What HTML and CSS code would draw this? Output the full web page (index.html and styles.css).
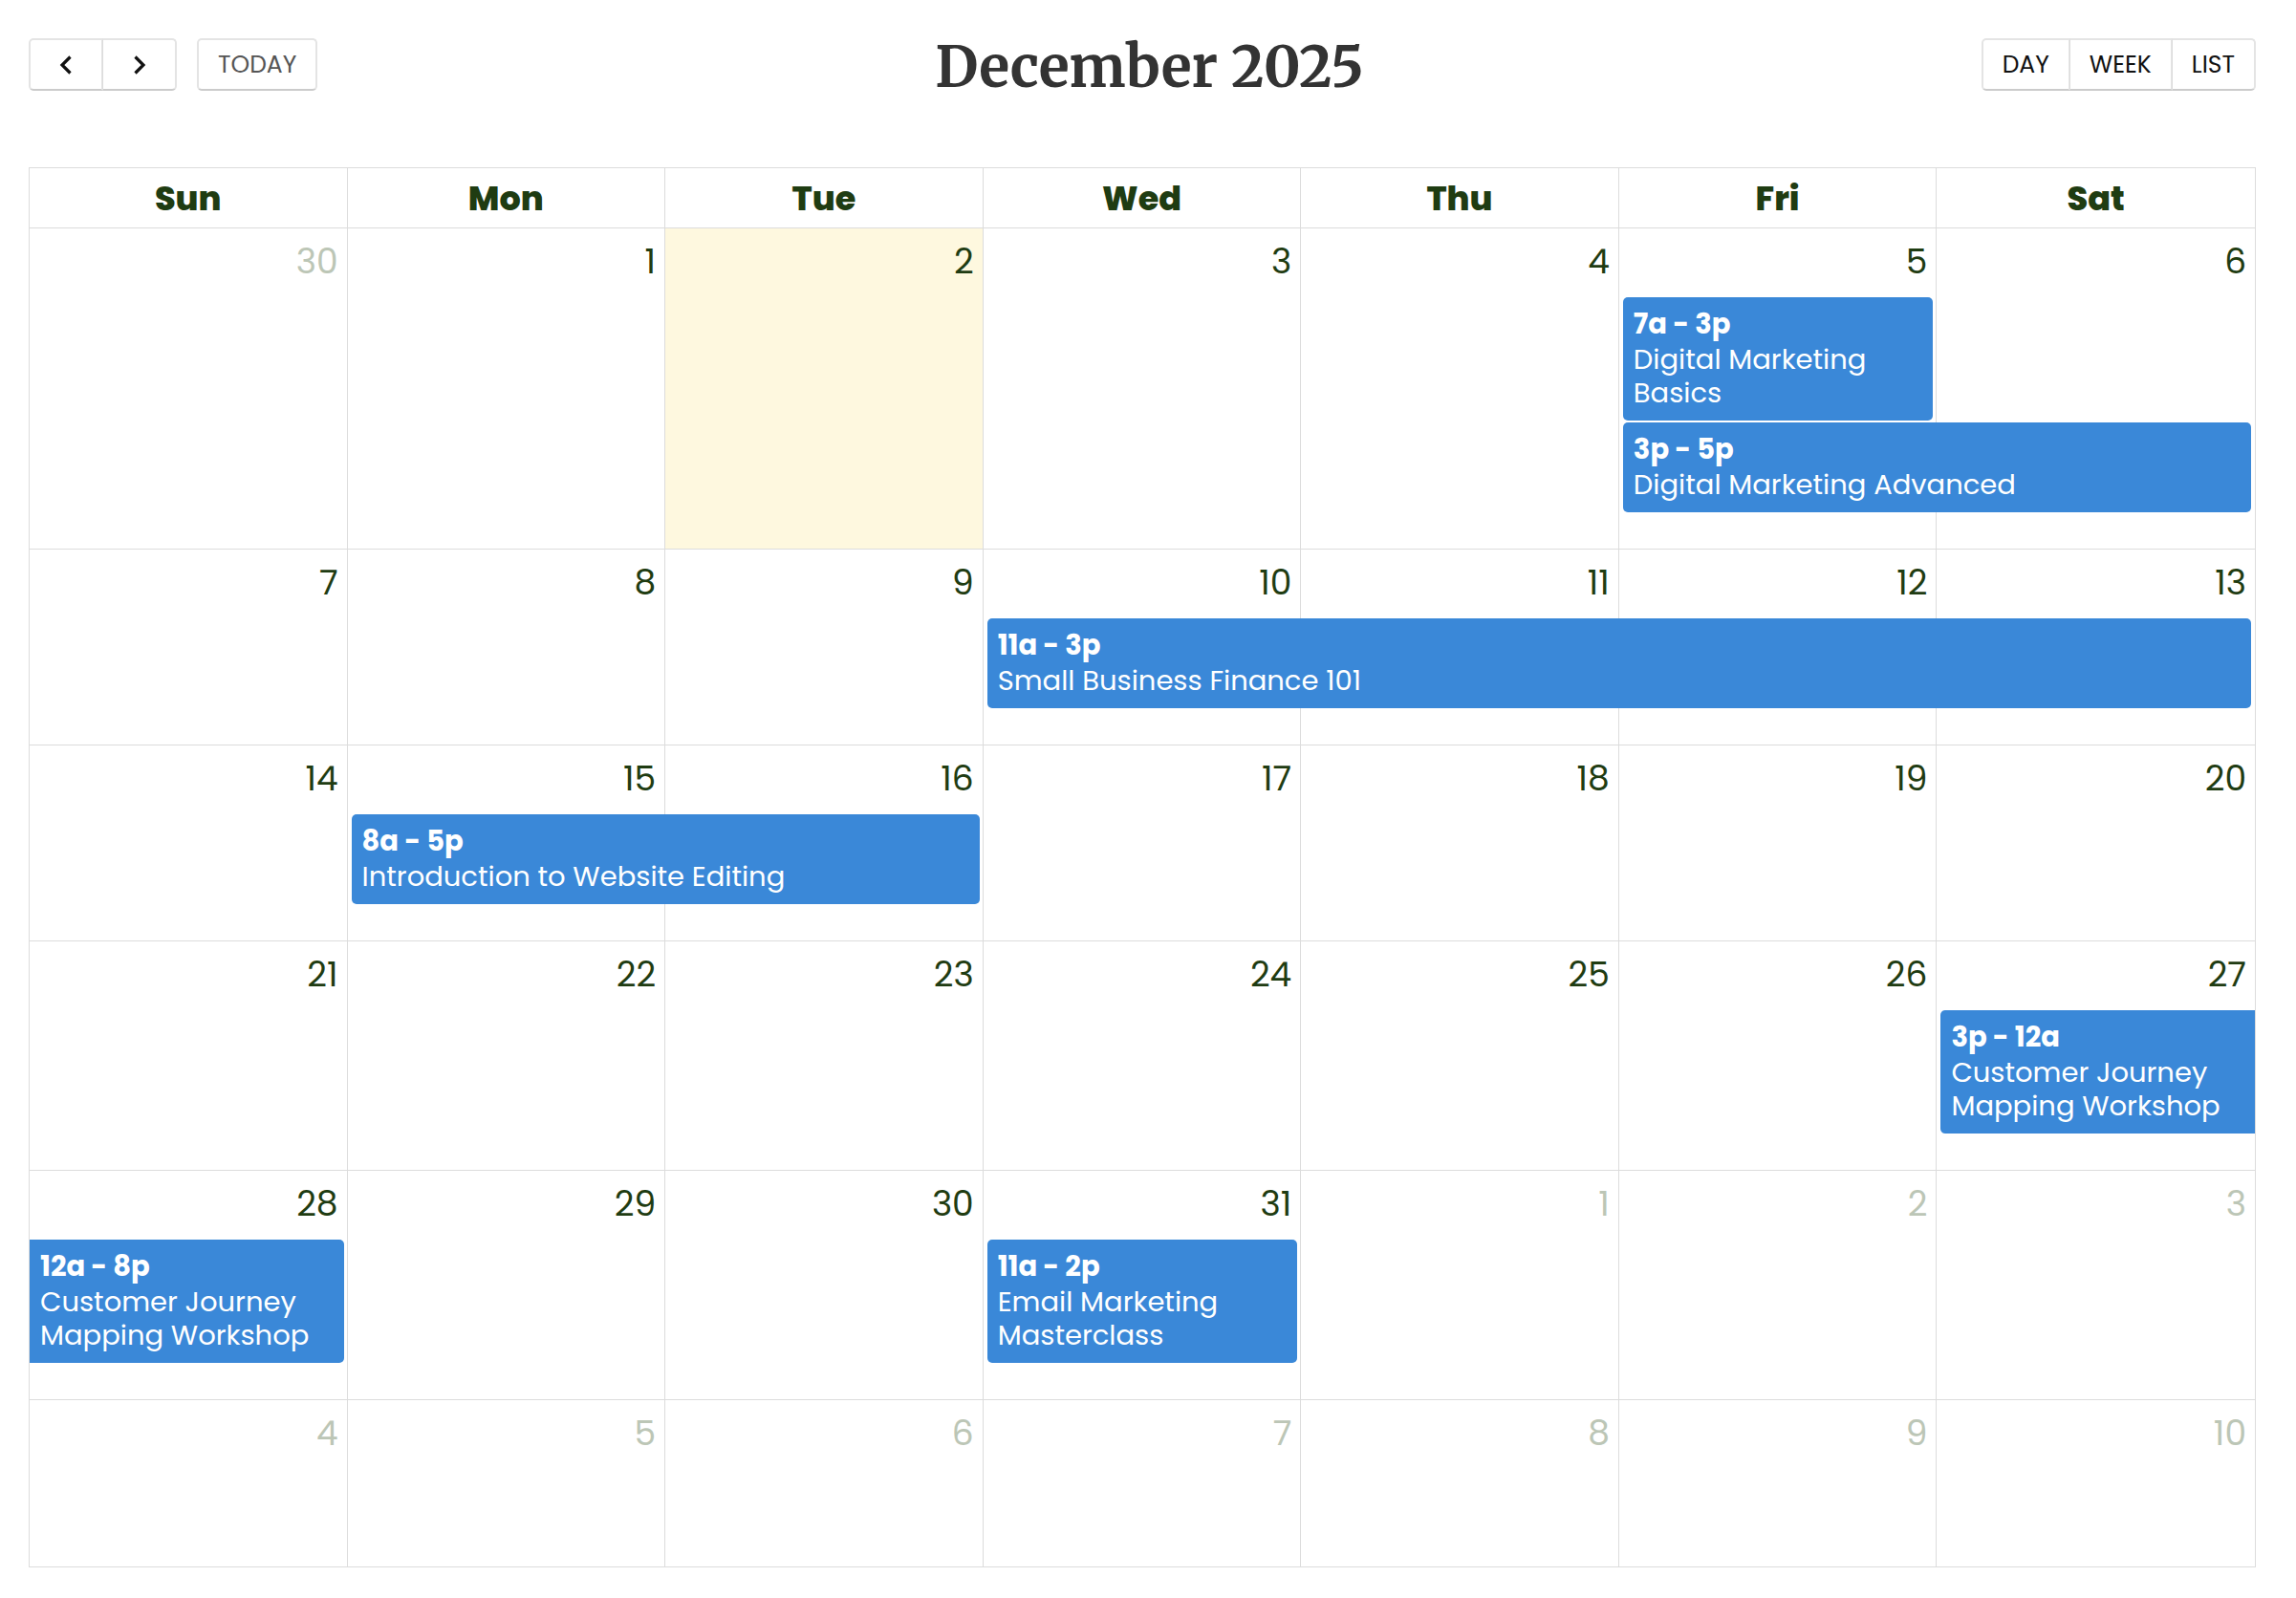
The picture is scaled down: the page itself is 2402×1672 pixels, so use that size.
FILE: index.html
```html
<!DOCTYPE html>
<html lang="en">
<head>
    <meta charset="UTF-8">
    <meta name="viewport" content="width=device-width, initial-scale=1.0">
    <title>Events Calendar</title>
    <link rel="stylesheet" href="styles.css">
</head>
<body>
    <div class="calendar">
        <div class="toolbar">
            <div class="toolbar-chunk">
                <div class="btn-group">
                    <button class="btn btn-icon" aria-label="prev">
                        <svg width="20" height="26" viewBox="0 0 20 26"><path d="M14.5 4.5 L6 13 L14.5 21.5" fill="none" stroke="#111" stroke-width="3.2"/></svg>
                    </button>
                    <button class="btn btn-icon" aria-label="next">
                        <svg width="20" height="26" viewBox="0 0 20 26"><path d="M5.5 4.5 L14 13 L5.5 21.5" fill="none" stroke="#111" stroke-width="3.2"/></svg>
                    </button>
                </div>
                <button class="btn btn-today">TODAY</button>
            </div>
            <h2 class="title">December 2025</h2>
            <div class="toolbar-chunk">
                <div class="btn-group">
                    <button class="btn">DAY</button>
                    <button class="btn">WEEK</button>
                    <button class="btn">LIST</button>
                </div>
            </div>
        </div>

        <div class="month">
            <div class="dow-row">
                <div class="dow">Sun</div>
                <div class="dow">Mon</div>
                <div class="dow">Tue</div>
                <div class="dow">Wed</div>
                <div class="dow">Thu</div>
                <div class="dow">Fri</div>
                <div class="dow">Sat</div>
            </div>

            <!-- week 1 -->
            <div class="week">
                <div class="day other">30</div>
                <div class="day">1</div>
                <div class="day today">2</div>
                <div class="day">3</div>
                <div class="day">4</div>
                <div class="day">5</div>
                <div class="day">6</div>
                <div class="event start-6 lane-1">
                    <div class="event-time">7a - 3p</div>
                    <div class="event-title">Digital Marketing Basics</div>
                </div>
                <div class="event start-6 span-2 lane-2">
                    <div class="event-time">3p - 5p</div>
                    <div class="event-title">Digital Marketing Advanced</div>
                </div>
            </div>

            <!-- week 2 -->
            <div class="week">
                <div class="day">7</div>
                <div class="day">8</div>
                <div class="day">9</div>
                <div class="day">10</div>
                <div class="day">11</div>
                <div class="day">12</div>
                <div class="day">13</div>
                <div class="event start-4 span-4 lane-1">
                    <div class="event-time">11a - 3p</div>
                    <div class="event-title">Small Business Finance 101</div>
                </div>
            </div>

            <!-- week 3 -->
            <div class="week">
                <div class="day">14</div>
                <div class="day">15</div>
                <div class="day">16</div>
                <div class="day">17</div>
                <div class="day">18</div>
                <div class="day">19</div>
                <div class="day">20</div>
                <div class="event start-2 span-2 lane-1">
                    <div class="event-time">8a - 5p</div>
                    <div class="event-title">Introduction to Website Editing</div>
                </div>
            </div>

            <!-- week 4 -->
            <div class="week">
                <div class="day">21</div>
                <div class="day">22</div>
                <div class="day">23</div>
                <div class="day">24</div>
                <div class="day">25</div>
                <div class="day">26</div>
                <div class="day">27</div>
                <div class="event start-7 lane-1 cont-right">
                    <div class="event-time">3p - 12a</div>
                    <div class="event-title">Customer Journey Mapping Workshop</div>
                </div>
            </div>

            <!-- week 5 -->
            <div class="week">
                <div class="day">28</div>
                <div class="day">29</div>
                <div class="day">30</div>
                <div class="day">31</div>
                <div class="day other">1</div>
                <div class="day other">2</div>
                <div class="day other">3</div>
                <div class="event start-1 lane-1 cont-left">
                    <div class="event-time">12a - 8p</div>
                    <div class="event-title">Customer Journey Mapping Workshop</div>
                </div>
                <div class="event start-4 lane-1">
                    <div class="event-time">11a - 2p</div>
                    <div class="event-title">Email Marketing Masterclass</div>
                </div>
            </div>

            <!-- week 6 -->
            <div class="week">
                <div class="day other">4</div>
                <div class="day other">5</div>
                <div class="day other">6</div>
                <div class="day other">7</div>
                <div class="day other">8</div>
                <div class="day other">9</div>
                <div class="day other">10</div>
            </div>
        </div>
    </div>
</body>
</html>
```

FILE: styles.css
```css
:root {
    --grid-color: #dcdcdc;
    --ink-green: #1f3c12;
    --event-color: #3a88d8;
    --today-color: #fef8df;
}
* {
    box-sizing: border-box;
}
body {
    margin: 0;
    background: #fff;
    font-family: "Poppins", "Open Sans", sans-serif;
    color: var(--ink-green);
}
.calendar {
    padding: 40px 42px 0 30px;
}

/* toolbar */
.toolbar {
    display: flex;
    justify-content: space-between;
    align-items: center;
    margin-bottom: 80px;
}
.toolbar-chunk {
    display: flex;
    align-items: center;
    gap: 21px;
}
.title {
    margin: 3px 0 -3px;
    font-family: "Merriweather", "Liberation Serif", serif;
    font-weight: 700;
    font-size: 59px;
    line-height: 55px;
    color: #333;
}
.btn-group {
    display: flex;
}
.btn {
    height: 55px;
    padding: 0 20px;
    background: #fff;
    border: 2px solid #e4e4e4;
    border-bottom-color: #cbcbcb;
    border-radius: 5px;
    font-family: inherit;
    font-size: 25px;
    color: #111;
    cursor: pointer;
    display: flex;
    align-items: center;
    justify-content: center;
}
.btn-group .btn {
    border-radius: 0;
}
.btn-group .btn + .btn {
    border-left: 1px solid var(--grid-color);
    margin-left: -1px;
}
.btn-group .btn:first-child {
    border-radius: 5px 0 0 5px;
}
.btn-group .btn:last-child {
    border-radius: 0 5px 5px 0;
}
.btn-icon {
    width: 78px;
    padding: 0;
}
.btn-today {
    color: #555;
}

/* month grid */
.month {
    border: 1px solid var(--grid-color);
}
.dow-row {
    display: grid;
    grid-template-columns: repeat(7, 1fr);
    border-bottom: 1px solid var(--grid-color);
}
.dow {
    height: 62px;
    display: flex;
    align-items: center;
    justify-content: center;
    font-size: 35px;
    font-weight: 800;
    border-right: 1px solid var(--grid-color);
}
.dow:last-child {
    border-right: none;
}
.week {
    display: grid;
    grid-template-columns: repeat(7, 1fr);
    grid-template-rows: 72px auto auto minmax(36px, 1fr);
    min-height: 175px;
    border-bottom: 1px solid var(--grid-color);
}
.week:last-child {
    border-bottom: none;
    min-height: 174px;
}
.day {
    grid-row: 1 / -1;
    padding: 17px 9px 0 0;
    text-align: right;
    font-size: 36px;
    line-height: 36px;
    border-right: 1px solid var(--grid-color);
}
.day:nth-child(1) { grid-column: 1; }
.day:nth-child(2) { grid-column: 2; }
.day:nth-child(3) { grid-column: 3; }
.day:nth-child(4) { grid-column: 4; }
.day:nth-child(5) { grid-column: 5; }
.day:nth-child(6) { grid-column: 6; }
.day:nth-child(7) { grid-column: 7; border-right: none; }
.day.other {
    color: #bcc6b6;
}
.day.today {
    background: var(--today-color);
}

/* events */
.event {
    margin: 0 4px 2px 4px;
    padding: 11px 11px 11px;
    background: var(--event-color);
    border-radius: 5px;
    color: #fff;
    font-size: 29px;
    line-height: 35px;
}
.event-time {
    font-weight: 700;
}
.event-title {
    margin-top: 2px;
}
.event.cont-left {
    margin-left: 0;
    border-top-left-radius: 0;
    border-bottom-left-radius: 0;
}
.event.cont-right {
    margin-right: 0;
    border-top-right-radius: 0;
    border-bottom-right-radius: 0;
}
.start-1 { grid-column-start: 1; }
.start-2 { grid-column-start: 2; }
.start-4 { grid-column-start: 4; }
.start-6 { grid-column-start: 6; }
.start-7 { grid-column-start: 7; }
.span-2 { grid-column-end: span 2; }
.span-4 { grid-column-end: span 4; }
.lane-1 { grid-row: 2; }
.lane-2 { grid-row: 3; }
```
